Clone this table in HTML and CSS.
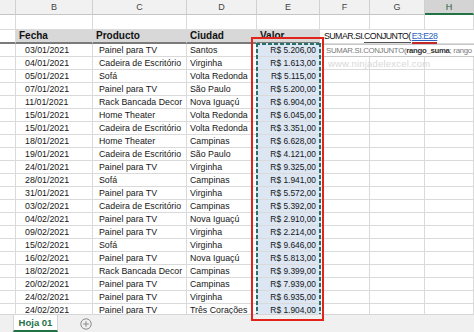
FILE: index.html
```html
<!DOCTYPE html>
<html lang="pt">
<head>
<meta charset="utf-8">
<title>Hoja 01</title>
<link rel="stylesheet" href="styles.css">
</head>
<body>
<div class="app">
  <div class="sheet">
    <div class="row colhead">
      <div class="c"></div>
      <div class="c">B</div>
      <div class="c">C</div>
      <div class="c">D</div>
      <div class="c">E</div>
      <div class="c">F</div>
      <div class="c">G</div>
      <div class="c active">H</div>
    </div>
    <div class="row blank">
      <div class="c"></div><div class="c"></div><div class="c"></div><div class="c"></div><div class="c"></div><div class="c"></div><div class="c"></div><div class="c"></div>
    </div>
    <div class="row titles">
      <div class="c"></div>
      <div class="c t">Fecha</div>
      <div class="c t">Producto</div>
      <div class="c t">Ciudad</div>
      <div class="c t">Valor</div>
      <div class="c formula"><span>SUMAR.SI.</span><span class="fn">CONJUNTO(</span><span class="ref">E3:E28</span></div>
      <div class="c nb"></div>
      <div class="c nb"></div>
    </div>
    <div class="rows">
      <div class="row d"><div class="c"></div><div class="c b">03/01/2021</div><div class="c p">Painel para TV</div><div class="c ci">Santos</div><div class="c v">R$ 5.206,00</div><div class="c"></div><div class="c"></div><div class="c"></div></div>
      <div class="row d"><div class="c"></div><div class="c b">04/01/2021</div><div class="c p">Cadeira de Escritório</div><div class="c ci">Virginha</div><div class="c v">R$ 1.613,00</div><div class="c"></div><div class="c"></div><div class="c"></div></div>
      <div class="row d"><div class="c"></div><div class="c b">05/01/2021</div><div class="c p">Sofá</div><div class="c ci">Volta Redonda</div><div class="c v">R$ 5.115,00</div><div class="c"></div><div class="c"></div><div class="c"></div></div>
      <div class="row d"><div class="c"></div><div class="c b">07/01/2021</div><div class="c p">Painel para TV</div><div class="c ci">São Paulo</div><div class="c v">R$ 5.200,00</div><div class="c"></div><div class="c"></div><div class="c"></div></div>
      <div class="row d"><div class="c"></div><div class="c b">11/01/2021</div><div class="c p">Rack Bancada Decor</div><div class="c ci">Nova Iguaçú</div><div class="c v">R$ 6.904,00</div><div class="c"></div><div class="c"></div><div class="c"></div></div>
      <div class="row d"><div class="c"></div><div class="c b">15/01/2021</div><div class="c p">Home Theater</div><div class="c ci">Volta Redonda</div><div class="c v">R$ 6.045,00</div><div class="c"></div><div class="c"></div><div class="c"></div></div>
      <div class="row d"><div class="c"></div><div class="c b">15/01/2021</div><div class="c p">Cadeira de Escritório</div><div class="c ci">Volta Redonda</div><div class="c v">R$ 3.351,00</div><div class="c"></div><div class="c"></div><div class="c"></div></div>
      <div class="row d"><div class="c"></div><div class="c b">18/01/2021</div><div class="c p">Home Theater</div><div class="c ci">Campinas</div><div class="c v">R$ 6.628,00</div><div class="c"></div><div class="c"></div><div class="c"></div></div>
      <div class="row d"><div class="c"></div><div class="c b">19/01/2021</div><div class="c p">Cadeira de Escritório</div><div class="c ci">São Paulo</div><div class="c v">R$ 4.121,00</div><div class="c"></div><div class="c"></div><div class="c"></div></div>
      <div class="row d"><div class="c"></div><div class="c b">24/01/2021</div><div class="c p">Painel para TV</div><div class="c ci">Virginha</div><div class="c v">R$ 9.325,00</div><div class="c"></div><div class="c"></div><div class="c"></div></div>
      <div class="row d"><div class="c"></div><div class="c b">28/01/2021</div><div class="c p">Sofá</div><div class="c ci">Campinas</div><div class="c v">R$ 1.941,00</div><div class="c"></div><div class="c"></div><div class="c"></div></div>
      <div class="row d"><div class="c"></div><div class="c b">31/01/2021</div><div class="c p">Painel para TV</div><div class="c ci">Virginha</div><div class="c v">R$ 5.572,00</div><div class="c"></div><div class="c"></div><div class="c"></div></div>
      <div class="row d"><div class="c"></div><div class="c b">03/02/2021</div><div class="c p">Cadeira de Escritório</div><div class="c ci">Campinas</div><div class="c v">R$ 5.392,00</div><div class="c"></div><div class="c"></div><div class="c"></div></div>
      <div class="row d"><div class="c"></div><div class="c b">04/02/2021</div><div class="c p">Painel para TV</div><div class="c ci">Nova Iguaçú</div><div class="c v">R$ 2.910,00</div><div class="c"></div><div class="c"></div><div class="c"></div></div>
      <div class="row d"><div class="c"></div><div class="c b">09/02/2021</div><div class="c p">Painel para TV</div><div class="c ci">Virginha</div><div class="c v">R$ 2.214,00</div><div class="c"></div><div class="c"></div><div class="c"></div></div>
      <div class="row d"><div class="c"></div><div class="c b">15/02/2021</div><div class="c p">Sofá</div><div class="c ci">Virginha</div><div class="c v">R$ 9.646,00</div><div class="c"></div><div class="c"></div><div class="c"></div></div>
      <div class="row d"><div class="c"></div><div class="c b">16/02/2021</div><div class="c p">Painel para TV</div><div class="c ci">Nova Iguaçú</div><div class="c v">R$ 5.813,00</div><div class="c"></div><div class="c"></div><div class="c"></div></div>
      <div class="row d"><div class="c"></div><div class="c b">18/02/2021</div><div class="c p">Rack Bancada Decor</div><div class="c ci">Campinas</div><div class="c v">R$ 9.399,00</div><div class="c"></div><div class="c"></div><div class="c"></div></div>
      <div class="row d"><div class="c"></div><div class="c b">20/02/2021</div><div class="c p">Painel para TV</div><div class="c ci">Campinas</div><div class="c v">R$ 7.939,00</div><div class="c"></div><div class="c"></div><div class="c"></div></div>
      <div class="row d"><div class="c"></div><div class="c b">24/02/2021</div><div class="c p">Painel para TV</div><div class="c ci">Virginha</div><div class="c v">R$ 6.935,00</div><div class="c"></div><div class="c"></div><div class="c"></div></div>
      <div class="row d"><div class="c"></div><div class="c b">24/02/2021</div><div class="c p">Painel para TV</div><div class="c ci">Três Corações</div><div class="c v">R$ 1.904,00</div><div class="c"></div><div class="c"></div><div class="c"></div></div>
    </div>

    <div class="tooltip">SUMAR.SI.CONJUNTO(<b>rango_suma</b>; rango</div>
    <div class="watermark">www.ninjadelexcel.com</div>
    <div class="marquee"></div>
  </div>
  <div class="tabbar">
    <div class="tab">Hoja 01</div>
    <div class="addtab">
      <svg width="12" height="12" viewBox="0 0 12 12"><circle cx="6" cy="6" r="5.2" fill="none" stroke="#8a8a8a" stroke-width="1"/><path d="M6 3.2V8.8M3.2 6H8.8" stroke="#8a8a8a" stroke-width="1"/></svg>
    </div>
  </div>
  <div class="redbox"></div>
</div>
</body>
</html>
```

FILE: styles.css
```css
* { box-sizing: border-box; }
html, body { margin: 0; padding: 0; background: #fff; }
body { font-family: "Liberation Sans", Arial, sans-serif; color: #111; }

.app { position: relative; width: 474px; height: 332px; overflow: hidden; display: flex; flex-direction: column; }

.sheet { position: relative; height: 314px; overflow: hidden; flex: none; }

.row {
  display: grid;
  grid-template-columns: 16px 77px 94px 70px 63px 50px 55px 49px;
}
.c {
  border-right: 1px solid #dadada;
  border-bottom: 1px solid #dadada;
  overflow: hidden;
  white-space: nowrap;
}

.colhead { height: 15px; }
.colhead .c {
  background: #f1f1f1;
  border-right-color: #d0d0d0;
  border-bottom-color: #c6c6c6;
  font-size: 9px;
  line-height: 14px;
  text-align: center;
  color: #444;
}
.colhead .c.active {
  background: #d4d4d4;
  border-bottom: 2px solid #217346;
  color: #2a5a3e;
}

.blank { height: 15px; }

.titles { height: 14px; }
.titles .c.t {
  background: #d8d8d8;
  border-right-color: #d8d8d8;
  border-bottom: 2px solid #7a7a7a;
  font-weight: bold;
  font-size: 10px;
  line-height: 12px;
  padding-left: 3px;
  color: #111;
}
.titles .c:first-child { border-bottom: 2px solid #7a7a7a; }
.titles .c.formula {
  overflow: visible;
  border-right: none;
  font-size: 8.8px;
  letter-spacing: -0.55px;
  line-height: 12px;
  padding-left: 4px;
  color: #111;
  position: relative;
  z-index: 2;
}
.titles .c.nb { border-right: none; }
.fn { border-bottom: 1px solid #555; padding-bottom: 1px; }
.ref {
  color: #2b62c0;
  text-decoration: underline;
  text-decoration-color: #2b62c0;
  border-bottom: 2px solid #c0282a;
  padding-bottom: 1px;
  margin-left: 1px;
}

.d { height: 13px; }
.d .c { font-size: 8.8px; line-height: 12px; color: #161616; }
.d .b { padding-left: 9px; }
.d .p { padding-left: 6px; }
.d .ci { padding-left: 3px; }
.d .v { text-align: right; padding-right: 3px; background: #dde7f3; font-size: 8.4px; }

.tooltip {
  position: absolute;
  left: 322px;
  top: 44px;
  width: 160px;
  height: 13px;
  background: #fff;
  border: 1px solid #c8c8c8;
  font-size: 7.8px;
  letter-spacing: -0.3px;
  line-height: 11px;
  padding-left: 3px;
  color: #7a7a7a;
  white-space: nowrap;
  overflow: hidden;
  z-index: 3;
}
.tooltip b { color: #333; }

.watermark {
  position: absolute;
  left: 328px;
  top: 58px;
  font-size: 9.5px;
  line-height: 12px;
  color: #d8d8d8;
  letter-spacing: 0.2px;
  z-index: 3;
}

.marquee {
  position: absolute;
  left: 256px;
  top: 43px;
  width: 65px;
  height: 290px;
  background:
    repeating-linear-gradient(to bottom, #2b6f6c 0 4px, #cfe6ea 4px 6px) left top / 2px 100% no-repeat,
    repeating-linear-gradient(to bottom, #2b6f6c 0 4px, #cfe6ea 4px 6px) right top / 2px 100% no-repeat,
    repeating-linear-gradient(to right, #2b6f6c 0 4px, #cfe6ea 4px 6px) left top / 100% 2px no-repeat;
  z-index: 4;
}
.redbox {
  position: absolute;
  left: 251px;
  top: 37px;
  width: 73px;
  height: 284px;
  border: 2px solid #e2231a;
  z-index: 5;
}

.tabbar {
  flex: none;
  height: 18px;
  background: #f0f0f0;
  border-top: 1px solid #d6d6d6;
  display: flex;
  align-items: stretch;
  padding-left: 13px;
  position: relative;
}
.tab {
  width: 45px;
  background: #fff;
  color: #217346;
  font-weight: bold;
  font-size: 9.5px;
  line-height: 15px;
  text-align: center;
  border-bottom: 2px solid #217346;
  border-left: 1px solid #d6d6d6;
  border-right: 1px solid #d6d6d6;
}
.addtab { display: flex; align-items: center; margin-left: 22px; }
.addtab svg { display: block; }
```
